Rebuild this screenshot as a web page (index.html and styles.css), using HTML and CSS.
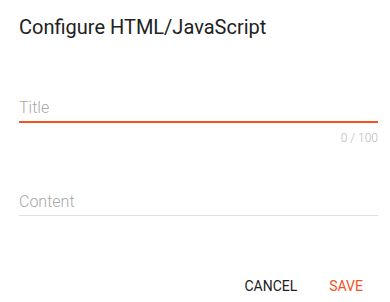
FILE: index.html
```html
<!DOCTYPE html>
<html lang="en">
<head>
    <meta charset="UTF-8">
    <meta name="viewport" content="width=device-width, initial-scale=1.0">
    <title>Configure HTML/JavaScript</title>
    <link rel="stylesheet" href="styles.css">
</head>
<body>
    <div class="dialog">
        <h1 class="dialog-title">Configure HTML/JavaScript</h1>

        <div class="field field-focused">
            <input type="text" class="field-input" placeholder="Title">
        </div>
        <div class="counter">0 / 100</div>

        <div class="field field-content">
            <input type="text" class="field-input" placeholder="Content">
        </div>

        <div class="actions">
            <button class="btn">CANCEL</button>
            <button class="btn btn-save">SAVE</button>
        </div>
    </div>
</body>
</html>
```

FILE: styles.css
```css
body {
    margin: 0;
    background-color: #fff;
    font-family: Roboto, "Liberation Sans", sans-serif;
    color: #212121;
}
.dialog {
    padding: 14px 12px 0 19px;
    width: 359px;
}
.dialog-title {
    margin: 0;
    font-size: 20px;
    font-weight: 400;
    line-height: 26px;
}
.field {
    margin-top: 59px;
    border-bottom: 1px solid #e0e0e0;
}
.field-focused {
    border-bottom: 2px solid #f4511e;
}
.field-content {
    margin-top: 48px;
}
.field-input {
    display: block;
    width: 100%;
    border: none;
    outline: none;
    padding: 0 0 4px 0;
    font-family: inherit;
    font-size: 16px;
    font-weight: 300;
    line-height: 18px;
    color: #212121;
    background: transparent;
}
.field-input::placeholder {
    color: #a8a8a8;
}
.counter {
    text-align: right;
    font-size: 12px;
    font-weight: 300;
    color: #b8b8b8;
    margin-top: 8px;
}
.actions {
    display: flex;
    justify-content: flex-end;
    gap: 32px;
    margin-top: 62px;
    padding-right: 15px;
}
.btn {
    border: none;
    background: none;
    padding: 0;
    font-family: inherit;
    font-size: 14px;
    font-weight: 400;
    color: #212121;
    cursor: pointer;
}
.btn-save {
    color: #f4511e;
}
```
